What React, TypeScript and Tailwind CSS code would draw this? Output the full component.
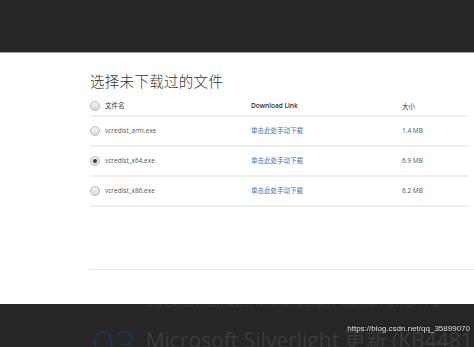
import React from "react";

type FileRow = { name: string; size: string; checked?: boolean };

const rows: FileRow[] = [
  { name: "vcredist_arm.exe", size: "1.4 MB" },
  { name: "vcredist_x64.exe", size: "6.9 MB", checked: true },
  { name: "vcredist_x86.exe", size: "6.2 MB" },
];

const font = "font-['Open_Sans','Noto_Sans_CJK_SC',sans-serif]";

function Radio({ checked }: { checked?: boolean }) {
  return (
    <span className="w-[10px] h-[10px] rounded-full border border-[#b9b9b9] bg-gradient-to-b from-[#f4f4f4] to-[#d9d9d9] flex items-center justify-center shrink-0">
      {checked && <span className="w-[4px] h-[4px] rounded-full bg-[#3a3a3a]" />}
    </span>
  );
}

export default function App() {
  return (
    <div className={`w-[474px] h-[347px] overflow-hidden flex flex-col ${font}`}>
      <div className="h-[53px] bg-[#262626] border-b border-[#9c9c9c] shrink-0" />

      <div className="h-[251px] bg-white shrink-0 pl-[90px] flex flex-col">
        <h1 className="mt-[18px] text-[14.5px] leading-[20px] text-[#333] font-['Noto_Sans_CJK_SC',sans-serif] font-light tracking-[0.3px]">
          选择未下载过的文件
        </h1>

        <div className="w-[378px] mt-[7px]">
          <div className="h-[19px] pt-[3px] grid grid-cols-[161px_151px_1fr] items-start border-b-2 border-[#efefef] text-[6.5px] text-[#333]">
            <div className="flex items-center gap-[5px]">
              <Radio />
              <span className="font-['Noto_Sans_CJK_SC',sans-serif]">文件名</span>
            </div>
            <div className="font-semibold leading-[10px] text-[#2e2e2e]">Download Link</div>
            <div className="font-['Noto_Sans_CJK_SC',sans-serif] leading-[10px]">大小</div>
          </div>

          {rows.map((r) => (
            <div
              key={r.name}
              className="h-[30px] grid grid-cols-[161px_151px_1fr] items-center border-b-2 border-[#efefef] text-[6.5px] text-[#555]"
            >
              <div className="flex items-center gap-[5px]">
                <Radio checked={r.checked} />
                <span>{r.name}</span>
              </div>
              <div className="text-[#3f75a8] font-['Noto_Sans_CJK_SC',sans-serif]">单击此处手动下载</div>
              <div>{r.size}</div>
            </div>
          ))}
        </div>

        <div className="mt-[62px] h-px bg-[#e6e6e6]" />
      </div>

      <div className="relative flex-1 bg-[#262626] overflow-hidden">
        <div className="pl-[145px] -mt-[6px] text-[9px] leading-[10px] text-[#3a3a3a] whitespace-nowrap">
          在线更新您的系统所需要的 Windows 更新程序，请选择以下文件进行下载
        </div>
        <div className="flex items-start gap-[8px] pl-[92px] mt-[17px] whitespace-nowrap">
          <span className="text-[40px] leading-[40px] font-light text-[#1d3350] font-['Open_Sans',sans-serif]">03</span>
          <span className="mt-[2px] text-[21px] leading-[26px] text-[#3b3b3b] font-['Open_Sans','Noto_Sans_CJK_SC',sans-serif]">
            Microsoft Silverlight 更新 (KB4481252)
          </span>
        </div>
        <div className="absolute right-[4px] top-[20px] text-[8px] leading-[10px] text-[#e8e8e8] drop-shadow-[0_0_1px_#000] font-['Liberation_Sans',sans-serif]">
          https://blog.csdn.net/qq_35899070
        </div>
      </div>
    </div>
  );
}
